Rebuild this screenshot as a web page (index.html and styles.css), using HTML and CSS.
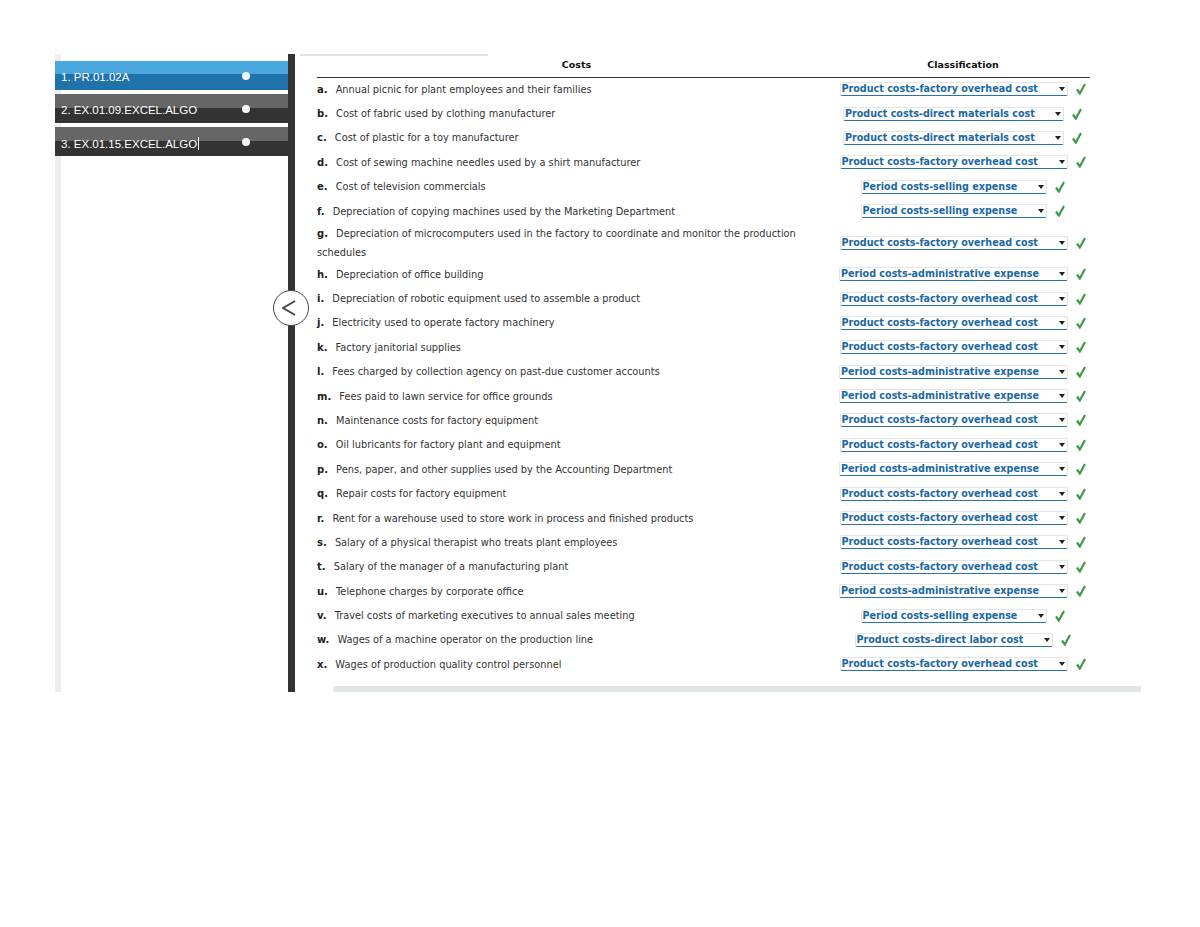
FILE: index.html
```html
<!DOCTYPE html>
<html lang="en">
<head>
<meta charset="utf-8">
<title>Cost classification</title>
<link rel="stylesheet" href="styles.css">
</head>
<body>
<div class="shell">
  <aside class="side">
    <ul class="nav">
      <li class="nav-item active"><span>1. PR.01.02A</span><i class="dot"></i></li>
      <li class="nav-item"><span>2. EX.01.09.EXCEL.ALGO</span><i class="dot"></i></li>
      <li class="nav-item"><span>3. EX.01.15.EXCEL.ALGO<b class="caret-bar"></b></span><i class="dot"></i></li>
    </ul>
    <button class="collapse" aria-label="Collapse">
      <svg width="18" height="18" viewBox="0 0 18 18"><path d="M13 2 L1 9 L13 16" fill="none" stroke="#444" stroke-width="2"/></svg>
    </button>
  </aside>
  <main class="main">
    <div class="top-shadow"></div>
    <table class="costs">
      <thead>
        <tr><th>Costs</th><th>Classification</th></tr>
      </thead>
      <tbody>
        <tr><td><b>a.</b> Annual picnic for plant employees and their families</td><td><div class="answer"><span class="pick"><select><option>Product costs-factory overhead cost</option></select></span><svg class="tick" viewBox="0 0 10 12"><path d="M1 6.5 L3.8 10.5 L9 1"/></svg></div></td></tr>
        <tr><td><b>b.</b> Cost of fabric used by clothing manufacturer</td><td><div class="answer"><span class="pick"><select><option>Product costs-direct materials cost</option></select></span><svg class="tick" viewBox="0 0 10 12"><path d="M1 6.5 L3.8 10.5 L9 1"/></svg></div></td></tr>
        <tr><td><b>c.</b> Cost of plastic for a toy manufacturer</td><td><div class="answer"><span class="pick"><select><option>Product costs-direct materials cost</option></select></span><svg class="tick" viewBox="0 0 10 12"><path d="M1 6.5 L3.8 10.5 L9 1"/></svg></div></td></tr>
        <tr><td><b>d.</b> Cost of sewing machine needles used by a shirt manufacturer</td><td><div class="answer"><span class="pick"><select><option>Product costs-factory overhead cost</option></select></span><svg class="tick" viewBox="0 0 10 12"><path d="M1 6.5 L3.8 10.5 L9 1"/></svg></div></td></tr>
        <tr><td><b>e.</b> Cost of television commercials</td><td><div class="answer"><span class="pick"><select><option>Period costs-selling expense</option></select></span><svg class="tick" viewBox="0 0 10 12"><path d="M1 6.5 L3.8 10.5 L9 1"/></svg></div></td></tr>
        <tr><td><b>f.</b> Depreciation of copying machines used by the Marketing Department</td><td><div class="answer"><span class="pick"><select><option>Period costs-selling expense</option></select></span><svg class="tick" viewBox="0 0 10 12"><path d="M1 6.5 L3.8 10.5 L9 1"/></svg></div></td></tr>
        <tr class="tall"><td><b>g.</b> Depreciation of microcomputers used in the factory to coordinate and monitor the production schedules</td><td><div class="answer"><span class="pick"><select><option>Product costs-factory overhead cost</option></select></span><svg class="tick" viewBox="0 0 10 12"><path d="M1 6.5 L3.8 10.5 L9 1"/></svg></div></td></tr>
        <tr><td><b>h.</b> Depreciation of office building</td><td><div class="answer"><span class="pick"><select><option>Period costs-administrative expense</option></select></span><svg class="tick" viewBox="0 0 10 12"><path d="M1 6.5 L3.8 10.5 L9 1"/></svg></div></td></tr>
        <tr><td><b>i.</b> Depreciation of robotic equipment used to assemble a product</td><td><div class="answer"><span class="pick"><select><option>Product costs-factory overhead cost</option></select></span><svg class="tick" viewBox="0 0 10 12"><path d="M1 6.5 L3.8 10.5 L9 1"/></svg></div></td></tr>
        <tr><td><b>j.</b> Electricity used to operate factory machinery</td><td><div class="answer"><span class="pick"><select><option>Product costs-factory overhead cost</option></select></span><svg class="tick" viewBox="0 0 10 12"><path d="M1 6.5 L3.8 10.5 L9 1"/></svg></div></td></tr>
        <tr><td><b>k.</b> Factory janitorial supplies</td><td><div class="answer"><span class="pick"><select><option>Product costs-factory overhead cost</option></select></span><svg class="tick" viewBox="0 0 10 12"><path d="M1 6.5 L3.8 10.5 L9 1"/></svg></div></td></tr>
        <tr><td><b>l.</b> Fees charged by collection agency on past-due customer accounts</td><td><div class="answer"><span class="pick"><select><option>Period costs-administrative expense</option></select></span><svg class="tick" viewBox="0 0 10 12"><path d="M1 6.5 L3.8 10.5 L9 1"/></svg></div></td></tr>
        <tr><td><b>m.</b> Fees paid to lawn service for office grounds</td><td><div class="answer"><span class="pick"><select><option>Period costs-administrative expense</option></select></span><svg class="tick" viewBox="0 0 10 12"><path d="M1 6.5 L3.8 10.5 L9 1"/></svg></div></td></tr>
        <tr><td><b>n.</b> Maintenance costs for factory equipment</td><td><div class="answer"><span class="pick"><select><option>Product costs-factory overhead cost</option></select></span><svg class="tick" viewBox="0 0 10 12"><path d="M1 6.5 L3.8 10.5 L9 1"/></svg></div></td></tr>
        <tr><td><b>o.</b> Oil lubricants for factory plant and equipment</td><td><div class="answer"><span class="pick"><select><option>Product costs-factory overhead cost</option></select></span><svg class="tick" viewBox="0 0 10 12"><path d="M1 6.5 L3.8 10.5 L9 1"/></svg></div></td></tr>
        <tr><td><b>p.</b> Pens, paper, and other supplies used by the Accounting Department</td><td><div class="answer"><span class="pick"><select><option>Period costs-administrative expense</option></select></span><svg class="tick" viewBox="0 0 10 12"><path d="M1 6.5 L3.8 10.5 L9 1"/></svg></div></td></tr>
        <tr><td><b>q.</b> Repair costs for factory equipment</td><td><div class="answer"><span class="pick"><select><option>Product costs-factory overhead cost</option></select></span><svg class="tick" viewBox="0 0 10 12"><path d="M1 6.5 L3.8 10.5 L9 1"/></svg></div></td></tr>
        <tr><td><b>r.</b> Rent for a warehouse used to store work in process and finished products</td><td><div class="answer"><span class="pick"><select><option>Product costs-factory overhead cost</option></select></span><svg class="tick" viewBox="0 0 10 12"><path d="M1 6.5 L3.8 10.5 L9 1"/></svg></div></td></tr>
        <tr><td><b>s.</b> Salary of a physical therapist who treats plant employees</td><td><div class="answer"><span class="pick"><select><option>Product costs-factory overhead cost</option></select></span><svg class="tick" viewBox="0 0 10 12"><path d="M1 6.5 L3.8 10.5 L9 1"/></svg></div></td></tr>
        <tr><td><b>t.</b> Salary of the manager of a manufacturing plant</td><td><div class="answer"><span class="pick"><select><option>Product costs-factory overhead cost</option></select></span><svg class="tick" viewBox="0 0 10 12"><path d="M1 6.5 L3.8 10.5 L9 1"/></svg></div></td></tr>
        <tr><td><b>u.</b> Telephone charges by corporate office</td><td><div class="answer"><span class="pick"><select><option>Period costs-administrative expense</option></select></span><svg class="tick" viewBox="0 0 10 12"><path d="M1 6.5 L3.8 10.5 L9 1"/></svg></div></td></tr>
        <tr><td><b>v.</b> Travel costs of marketing executives to annual sales meeting</td><td><div class="answer"><span class="pick"><select><option>Period costs-selling expense</option></select></span><svg class="tick" viewBox="0 0 10 12"><path d="M1 6.5 L3.8 10.5 L9 1"/></svg></div></td></tr>
        <tr><td><b>w.</b> Wages of a machine operator on the production line</td><td><div class="answer"><span class="pick"><select><option>Product costs-direct labor cost</option></select></span><svg class="tick" viewBox="0 0 10 12"><path d="M1 6.5 L3.8 10.5 L9 1"/></svg></div></td></tr>
        <tr><td><b>x.</b> Wages of production quality control personnel</td><td><div class="answer"><span class="pick"><select><option>Product costs-factory overhead cost</option></select></span><svg class="tick" viewBox="0 0 10 12"><path d="M1 6.5 L3.8 10.5 L9 1"/></svg></div></td></tr>
      </tbody>
    </table>
    <div class="hscroll"></div>
  </main>
</div>
</body>
</html>
```
FILE: styles.css
```css
* { box-sizing: border-box; }
html, body { margin: 0; background: #fff; }
body { height: 927px; padding: 54px 0 0 55px; font-family: "DejaVu Sans", sans-serif; overflow: hidden; }
.shell { display: flex; height: 638px; }
.side {
  position: relative;
  flex: 0 0 240px;
  padding-top: 7px;
  border-right: 7px solid #333;
  background: linear-gradient(to right, #eee 6px, #fff 6px);
}
.nav { list-style: none; margin: 0; padding: 0; display: flex; flex-direction: column; gap: 4px; }
.nav-item {
  display: flex;
  align-items: center;
  justify-content: space-between;
  height: 29px;
  padding: 1px 38px 0 6px;
  color: #fff;
  font: 11.5px/1 "Liberation Sans", Arial, sans-serif;
  background: linear-gradient(to bottom, #666 0, #666 48%, #333 48%, #333 100%);
}
.nav-item span { padding-top: 3px; }
.nav-item.active { background: linear-gradient(to bottom, #4aa7de 0, #4aa7de 45%, #1f73aa 45%, #1f73aa 100%); }
.dot { width: 8px; height: 8px; border-radius: 50%; background: #f4f4f4; }
.caret-bar { display: inline-block; width: 1px; height: 13px; margin-left: 1px; vertical-align: -2px; background: #fff; }
.collapse {
  position: absolute;
  top: 236px;
  right: -21px;
  display: flex;
  align-items: center;
  justify-content: center;
  width: 36px;
  height: 36px;
  padding: 0;
  border: 1.5px solid #444;
  border-radius: 50%;
  background: #fff;
}
.main { position: relative; flex: 1; padding-left: 22px; }
.top-shadow {
  position: absolute;
  top: 0;
  left: 5px;
  width: 188px;
  height: 2px;
  background: #e4e4e4;
}
.costs {
  width: 773px;
  margin-top: 0;
  border-collapse: collapse;
  table-layout: fixed;
  font-size: 9.8px;
  color: #333;
}
.costs th {
  height: 23px;
  padding: 0 0 1px;
  color: #111;
  font-size: 9.5px;
  font-weight: bold;
  text-align: center;
  border-bottom: 1px solid #333;
}
.costs th:last-child, .costs td:last-child { width: 254px; }
.costs td { height: 24.4px; padding: 0 38px 0 0; line-height: 19px; vertical-align: middle; }
.costs td:last-child { padding: 0; }
.costs td b { margin-right: 5px; color: #222; font-size: 10px; }
.tall td { height: 38.6px; }
.answer { display: flex; align-items: center; justify-content: center; gap: 8px; padding-right: 1px; }
.pick { position: relative; display: inline-flex; }
.pick::after {
  content: "";
  position: absolute;
  right: 3px;
  top: 5px;
  border: 3px solid transparent;
  border-top: 4px solid #222;
  border-bottom: 0;
}
.pick select {
  appearance: none;
  -webkit-appearance: none;
  height: 14px;
  padding: 0 28px 0 1px;
  border: 1px solid #e4e4e4;
  border-bottom: 1.5px solid #2a72a8;
  border-radius: 2px;
  background: #fff;
  color: #1c68a0;
  font: bold 9.6px/12px "DejaVu Sans", sans-serif;
}
.tick { width: 10px; height: 12px; flex: none; }
.tick path { fill: none; stroke: #3f9a46; stroke-width: 2.2; }
.hscroll {
  position: absolute;
  left: 38px;
  bottom: 0;
  width: 808px;
  height: 6px;
  border-radius: 3px 0 0 0;
  background: #e0e5e8;
}
```
